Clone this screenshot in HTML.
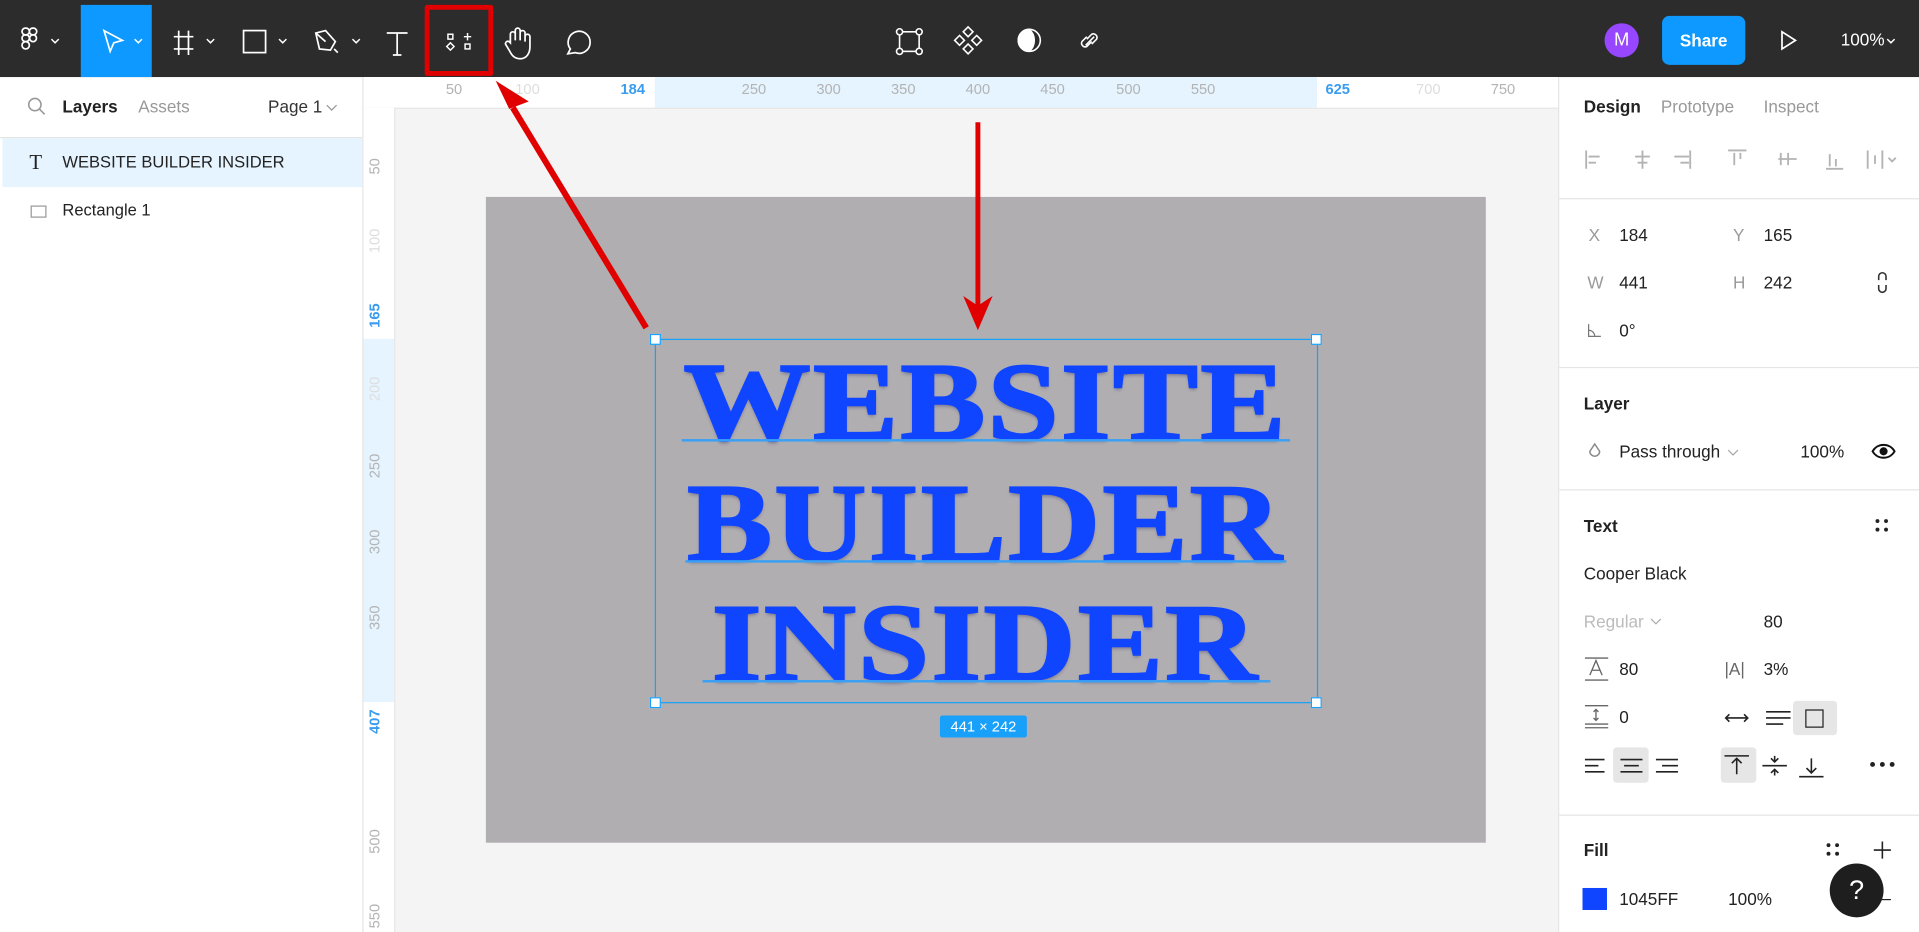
<!DOCTYPE html>
<html><head><meta charset="utf-8"><style>
html,body{margin:0;padding:0;width:1919px;height:932px;overflow:hidden;background:#fff}
#w{position:absolute;left:0;top:0;width:1568px;height:762px;transform:scale(1.2239,1.2231);transform-origin:0 0;font-family:"Liberation Sans",sans-serif;color:#222}
.a{position:absolute}
.t{position:absolute;white-space:nowrap;font-size:14px}
.rl{position:absolute;font-size:12px;color:#b3b3b3;transform:translateX(-50%)}
.rv{position:absolute;font-size:12px;color:#b3b3b3;transform:translate(-50%,-50%) rotate(-90deg)}
.dv{position:absolute;left:1274px;width:294px;height:1px;background:#e5e5e5}
.big{position:absolute;left:535px;width:541px;text-align:center;font-family:"Liberation Serif",serif;font-weight:bold;font-size:90px;color:#1045ff;letter-spacing:2px;text-shadow:0 2px 3px rgba(0,0,80,.35);line-height:100px;transform:scaleX(1.15);transform-origin:50% 0;-webkit-text-stroke:2px #1045ff}
.ul{position:absolute;height:2px;background:#3aa0f5}
.h{position:absolute;width:7px;height:7px;background:#fff;border:1px solid #18a0fb}
</style></head><body><div id="w">
<!-- toolbar -->
<div class="a" style="left:0;top:0;width:1568px;height:63px;background:#2c2c2c"></div>
<div class="a" style="left:66px;top:4px;width:58px;height:59px;background:#0d99ff"></div>
<svg class="a" style="left:0;top:0" width="1568" height="63" fill="none" stroke="#fff" stroke-width="1.4">
<g transform="translate(18,23)"><rect x="0" y="0" width="6" height="5.5" rx="2.7"/><rect x="6" y="0" width="6" height="5.5" rx="2.7"/><rect x="0" y="5.5" width="6" height="5.5" rx="2.7"/><circle cx="9" cy="8.2" r="2.8"/><rect x="0" y="11" width="6" height="6" rx="3"/></g>
<path d="M42 32l3 3 3-3M110 32l3 3 3-3M169 32l3 3 3-3M228 32l3 3 3-3M288 32l3 3 3-3M1542 32l3 3 3-3" stroke-width="1.2"/>
<path d="M85 25l15 8-7 2-3 7z" />
<path d="M146 25v20M154 25v20M142 30h16M142 40h16"/>
<rect x="199" y="25" width="18" height="18"/>
<path d="M258 27l8-2 8 9-4 7-9-1-3-13zM266 34l-8-7M273 40l3 3"/>
<path d="M316 27h17M324.5 27v18M321 45h7"/>
<rect x="366" y="28" width="4" height="4" stroke-width="1.2"/><path d="M379 30h6M382 27v6" stroke-width="1.2"/>
<path d="M368 35l3 3-3 3-3-3z" stroke-width="1.2"/><rect x="380" y="36" width="4" height="4" stroke-width="1.2"/>
<path d="M417 35v-7a2 2 0 0 1 4 0v5-8a2 2 0 0 1 4 0v8-6a2 2 0 0 1 4 0v7-4a2 2 0 0 1 4 0v8c0 6-3 10-8 10s-7-3-9-7l-3-5a2 2 0 0 1 3-2z"/>
<path d="M464 44l2-4a9 9 0 1 1 4 3z"/>
<g stroke-width="1.3"><rect x="735" y="26" width="16" height="16"/><circle cx="735" cy="26" r="2.5" fill="#2c2c2c"/><circle cx="751" cy="26" r="2.5" fill="#2c2c2c"/><circle cx="735" cy="42" r="2.5" fill="#2c2c2c"/><circle cx="751" cy="42" r="2.5" fill="#2c2c2c"/>
<path d="M791 22l4 4-4 4-4-4zM791 36l4 4-4 4-4-4zM784 29l4 4-4 4-4-4zM798 29l4 4-4 4-4-4z"/>
<circle cx="841" cy="33" r="9"/><path d="M841 24A9 9 0 0 0 841 42A12 12 0 0 0 841 24z" fill="#fff"/>
<path d="M888 30l-4 4a3 3 0 0 0 4 4l4-4M892 36l4-4a3 3 0 0 0-4-4l-4 4M887 37l7-7"/></g>
<path d="M1456 26v14l11-7z"/>
</svg>
<div class="a" style="left:347px;top:4px;width:48px;height:50px;border:4px solid #e00000;border-radius:2px"></div>
<div class="a" style="left:1311px;top:19px;width:28px;height:28px;border-radius:50%;background:#9747ff;color:#fff;font-size:15px;text-align:center;line-height:28px">M</div>
<div class="a" style="left:1358px;top:13px;width:68px;height:40px;border-radius:6px;background:#0d99ff;color:#fff;font-size:14px;font-weight:bold;text-align:center;line-height:40px">Share</div>
<div class="t" style="left:1504px;top:24px;color:#fff">100%</div>
<!-- left panel -->
<div class="a" style="left:296px;top:63px;width:1px;height:699px;background:#e5e5e5"></div>
<svg class="a" style="left:22px;top:79px" width="16" height="16" fill="none" stroke="#999" stroke-width="1.3"><circle cx="6.5" cy="6.5" r="5"/><path d="M10 10l4.5 4.5"/></svg>
<div class="t" style="left:51px;top:79px;font-weight:bold">Layers</div>
<div class="t" style="left:113px;top:79px;color:#999">Assets</div>
<div class="t" style="left:219px;top:79px;color:#333">Page 1</div>
<svg class="a" style="left:266px;top:85px" width="10" height="6" fill="none" stroke="#999"><path d="M1 1l4 4 4-4"/></svg>
<div class="a" style="left:0;top:112px;width:296px;height:1px;background:#e5e5e5"></div>
<div class="a" style="left:2px;top:113px;width:294px;height:40px;background:#e5f4ff"></div>
<div class="t" style="left:24px;top:123px;font-family:'Liberation Serif',serif;font-size:17px">T</div>
<div class="t" style="left:51px;top:125px;font-size:13.5px">WEBSITE BUILDER INSIDER</div>
<div class="a" style="left:25px;top:168px;width:11px;height:8px;border:1px solid #999"></div>
<div class="t" style="left:51px;top:164px;font-size:13.5px">Rectangle 1</div>
<!-- rulers & canvas -->
<div class="a" style="left:297px;top:63px;width:976px;height:699px;background:#f4f4f4"></div>
<div class="a" style="left:297px;top:63px;width:976px;height:25px;background:#fff;border-bottom:1px solid #e5e5e5"></div>
<div class="a" style="left:535px;top:63px;width:541px;height:25px;background:#e5f4ff"></div>
<div class="a" style="left:297px;top:88px;width:25px;height:674px;background:#fff;border-right:1px solid #e5e5e5"></div>
<div class="a" style="left:297px;top:277px;width:25px;height:297px;background:#e5f4ff"></div>
<div class="rl" style="left:371px;top:66px">50</div><div class="rl" style="left:431px;top:66px;color:#ddd">100</div>
<div class="rl" style="left:517px;top:66px;color:#3a9cf0;font-weight:bold">184</div>
<div class="rl" style="left:616px;top:66px">250</div><div class="rl" style="left:677px;top:66px">300</div><div class="rl" style="left:738px;top:66px">350</div><div class="rl" style="left:799px;top:66px">400</div><div class="rl" style="left:860px;top:66px">450</div><div class="rl" style="left:922px;top:66px">500</div><div class="rl" style="left:983px;top:66px">550</div>
<div class="rl" style="left:1093px;top:66px;color:#3a9cf0;font-weight:bold">625</div>
<div class="rl" style="left:1167px;top:66px;color:#ddd">700</div><div class="rl" style="left:1228px;top:66px">750</div>
<div class="rv" style="left:306px;top:136px">50</div><div class="rv" style="left:306px;top:197px;color:#ddd">100</div>
<div class="rv" style="left:306px;top:258px;color:#3a9cf0;font-weight:bold">165</div>
<div class="rv" style="left:306px;top:318px;color:#ddd">200</div><div class="rv" style="left:306px;top:381px">250</div><div class="rv" style="left:306px;top:443px">300</div><div class="rv" style="left:306px;top:505px">350</div>
<div class="rv" style="left:306px;top:590px;color:#3a9cf0;font-weight:bold">407</div>
<div class="rv" style="left:306px;top:688px">500</div><div class="rv" style="left:306px;top:749px">550</div>
<div class="a" style="left:397px;top:161px;width:817px;height:528px;background:#b0aeb1"></div>
<div class="a" style="left:535px;top:277px;width:540px;height:296px;border:1px solid #18a0fb"></div>
<div class="h" style="left:531px;top:273px"></div><div class="h" style="left:1071px;top:273px"></div><div class="h" style="left:531px;top:570px"></div><div class="h" style="left:1071px;top:570px"></div>
<div class="big" style="top:280px">WEBSITE</div>
<div class="big" style="top:379px">BUILDER</div>
<div class="big" style="top:477px">INSIDER</div>
<div class="ul" style="left:557px;top:359px;width:497px"></div>
<div class="ul" style="left:560px;top:458px;width:491px"></div>
<div class="ul" style="left:574px;top:556px;width:464px"></div>
<div class="a" style="left:768px;top:585px;width:71px;height:18px;background:#18a0fb;border-radius:2px;color:#fff;font-size:12px;text-align:center;line-height:18px">441 × 242</div>
<svg class="a" style="left:0;top:0" width="1568" height="762">
<path d="M528 268L419 88" stroke="#e00000" stroke-width="5"/><path d="M405 66l27 17-16 6z" fill="#e00000"/>
<path d="M799 100V250" stroke="#e00000" stroke-width="4"/><path d="M787 242l12 28 12-28-12 8z" fill="#e00000"/>
</svg>
<!-- right panel -->
<div class="a" style="left:1273px;top:63px;width:1px;height:699px;background:#e5e5e5"></div>
<div class="t" style="left:1294px;top:79px;font-weight:bold">Design</div>
<div class="t" style="left:1357px;top:79px;color:#999">Prototype</div>
<div class="t" style="left:1441px;top:79px;color:#999">Inspect</div>
<svg class="a" style="left:1280px;top:118px" width="288" height="26" fill="none" stroke="#b3b3b3" stroke-width="1.5">
<path d="M16 5v15M18 10h9M18 15h6M62 5v15M56 10h12M58 15h8M101 5v15M88 10h12M93 15h7M132 5h15M137 7v10M142 7v5M173 12h15M175 7v10M181 7v10M212 20h14M215 8v10M220 12v6M246 5v15M252 9v7M258 5v15M263 11l3 3 3-3"/>
</svg>
<div class="dv" style="top:162px"></div>
<div class="t" style="left:1298px;top:184px;color:#999">X</div><div class="t" style="left:1323px;top:184px">184</div>
<div class="t" style="left:1416px;top:184px;color:#999">Y</div><div class="t" style="left:1441px;top:184px">165</div>
<div class="t" style="left:1297px;top:223px;color:#999">W</div><div class="t" style="left:1323px;top:223px">441</div>
<div class="t" style="left:1416px;top:223px;color:#999">H</div><div class="t" style="left:1441px;top:223px">242</div>
<svg class="a" style="left:1532px;top:221px" width="12" height="20" fill="none" stroke="#333" stroke-width="1.3"><path d="M3 8V5a3 3 0 0 1 6 0v3M3 12v3a3 3 0 0 0 6 0v-3"/></svg>
<svg class="a" style="left:1297px;top:264px" width="12" height="12" fill="none" stroke="#777"><path d="M1 1v10h10M1 6a5 5 0 0 1 5 5"/></svg>
<div class="t" style="left:1323px;top:262px">0°</div>
<div class="dv" style="top:300px"></div>
<div class="t" style="left:1294px;top:322px;font-weight:bold">Layer</div>
<svg class="a" style="left:1297px;top:362px" width="12" height="14" fill="none" stroke="#888" stroke-width="1.2"><path d="M6 1l4 6a4 4 0 1 1-8 0z"/></svg>
<div class="t" style="left:1323px;top:361px">Pass through</div>
<svg class="a" style="left:1411px;top:367px" width="10" height="6" fill="none" stroke="#aaa"><path d="M1 1l4 4 4-4"/></svg>
<div class="t" style="left:1471px;top:361px">100%</div>
<svg class="a" style="left:1529px;top:362px" width="20" height="14" fill="none" stroke="#111" stroke-width="1.6"><path d="M1 7c4-7 14-7 18 0c-4 7-14 7-18 0z"/><circle cx="10" cy="7" r="2.5" fill="#111"/></svg>
<div class="dv" style="top:400px"></div>
<div class="t" style="left:1294px;top:422px;font-weight:bold">Text</div>
<svg class="a" style="left:1531px;top:423px" width="14" height="14" fill="#222"><circle cx="3" cy="3" r="1.6"/><circle cx="10" cy="3" r="1.6"/><circle cx="3" cy="10" r="1.6"/><circle cx="10" cy="10" r="1.6"/></svg>
<div class="t" style="left:1294px;top:461px">Cooper Black</div>
<div class="t" style="left:1294px;top:500px;color:#bbb">Regular</div>
<svg class="a" style="left:1348px;top:505px" width="10" height="6" fill="none" stroke="#aaa"><path d="M1 1l4 4 4-4"/></svg>
<div class="t" style="left:1441px;top:500px">80</div>
<svg class="a" style="left:1293px;top:536px" width="22" height="22" fill="none" stroke="#666" stroke-width="1.1"><path d="M2 2h19M2 20h19M6 16l5-12 5 12M8 12h6"/></svg>
<div class="t" style="left:1323px;top:539px">80</div>
<div class="t" style="left:1409px;top:539px;color:#666">|A|</div><div class="t" style="left:1441px;top:539px">3%</div>
<svg class="a" style="left:1293px;top:575px" width="22" height="22" fill="none" stroke="#666" stroke-width="1.1"><path d="M2 2h19M2 17h19M2 20h19M11 5v9M9 7l2-2 2 2M9 12l2 2 2-2"/></svg>
<div class="t" style="left:1323px;top:578px">0</div>
<svg class="a" style="left:1408px;top:576px" width="90" height="22" fill="none" stroke="#222" stroke-width="1.3"><path d="M2 11h18M5 8l-3 3 3 3M17 8l3 3-3 3M35 6h20M35 11h20M35 16h14"/></svg>
<div class="a" style="left:1465px;top:573px;width:36px;height:28px;background:#e6e6e6;border-radius:3px"></div>
<div class="a" style="left:1475px;top:580px;width:13px;height:13px;border:1.5px solid #222"></div>
<div class="a" style="left:1318px;top:611px;width:29px;height:29px;background:#e6e6e6;border-radius:3px"></div>
<div class="a" style="left:1406px;top:611px;width:29px;height:29px;background:#e6e6e6;border-radius:3px"></div>
<svg class="a" style="left:1290px;top:612px" width="200" height="28" fill="none" stroke="#222" stroke-width="1.3"><path d="M5 9h16M5 14h11M5 19h16M34 9h18M37 14h12M34 19h18M63 9h18M68 14h13M63 19h18M119 6h20M129 21V8M125 12l4-4 4 4M150 14h20M160 6v5M157 8l3 3 3-3M160 22v-5M157 20l3-3 3 3M180 23h20M190 8v12M186 16l4 4 4-4"/></svg>
<svg class="a" style="left:1526px;top:621px" width="24" height="8" fill="#222"><circle cx="4" cy="4" r="2"/><circle cx="12" cy="4" r="2"/><circle cx="20" cy="4" r="2"/></svg>
<div class="dv" style="top:666px"></div>
<div class="t" style="left:1294px;top:687px;font-weight:bold">Fill</div>
<svg class="a" style="left:1491px;top:688px" width="14" height="14" fill="#222"><circle cx="3" cy="3" r="1.6"/><circle cx="10" cy="3" r="1.6"/><circle cx="3" cy="10" r="1.6"/><circle cx="10" cy="10" r="1.6"/></svg>
<svg class="a" style="left:1530px;top:687px" width="16" height="16" fill="none" stroke="#222" stroke-width="1.3"><path d="M8 1v14M1 8h14"/></svg>
<div class="a" style="left:1293px;top:726px;width:20px;height:18px;background:#1045ff"></div>
<div class="t" style="left:1323px;top:727px">1045FF</div>
<div class="t" style="left:1412px;top:727px">100%</div>
<div class="a" style="left:1535px;top:735px;width:10px;height:1px;background:#222"></div>
<div class="a" style="left:1495px;top:706px;width:44px;height:44px;border-radius:50%;background:#1e1e1e;color:#fff;font-size:22px;text-align:center;line-height:44px">?</div>
</div></body></html>
